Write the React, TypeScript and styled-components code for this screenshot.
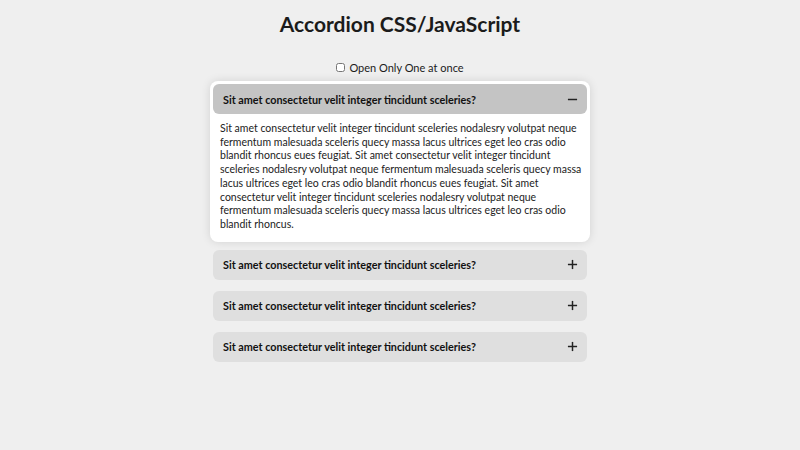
import React, { useState } from "react";
import styled, { createGlobalStyle } from "styled-components";

const GlobalStyle = createGlobalStyle`
  body {
    margin: 0;
    background: #efefef;
    font-family: Lato, "Noto Sans", sans-serif;
    color: #1b1b1b;
  }
`;

const Page = styled.main`
  width: 380px;
  margin: 0 auto;
  padding-top: 10px;
  display: flex;
  flex-direction: column;
  align-items: stretch;
`;

const Title = styled.h1`
  margin: 0;
  text-align: center;
  font-size: 21px;
  font-weight: 700;
  line-height: 28px;
`;

const Toggle = styled.label`
  margin: 21px 0 6px;
  display: flex;
  justify-content: center;
  align-items: center;
  gap: 4px;
  font-size: 11px;
  height: 16px;
  input {
    width: 9px;
    height: 9px;
    margin: 0;
  }
`;

const List = styled.div`
  display: flex;
  flex-direction: column;
  gap: 5px;
`;

const Item = styled.section<{ $open: boolean }>`
  padding: 3px;
  border-radius: 8px;
  background: ${(p) => (p.$open ? "#ffffff" : "transparent")};
  box-shadow: ${(p) => (p.$open ? "0 0 10px rgba(0, 0, 0, 0.12)" : "none")};
`;

const Header = styled.button<{ $open: boolean }>`
  width: 100%;
  height: 30px;
  padding: 0 9px 0 10px;
  border: none;
  border-radius: 6px;
  background: ${(p) => (p.$open ? "#c4c4c4" : "#dfdfdf")};
  display: flex;
  align-items: center;
  justify-content: space-between;
  font-family: inherit;
  font-size: 10.8px;
  font-weight: 700;
  color: #111;
  cursor: pointer;
  text-align: left;
`;

const Icon = styled.svg`
  width: 11px;
  height: 11px;
  stroke: #222;
  stroke-width: 1.6;
`;

const Body = styled.p`
  margin: 0;
  padding: 8px 3px 7px 7px;
  font-size: 10.5px;
  line-height: 13.7px;
  color: #222;
`;

const question = "Sit amet consectetur velit integer tincidunt sceleries?";
const answer =
  "Sit amet consectetur velit integer tincidunt sceleries nodalesry volutpat neque fermentum malesuada sceleris quecy massa lacus ultrices eget leo cras odio blandit rhoncus eues feugiat. Sit amet consectetur velit integer tincidunt sceleries nodalesry volutpat neque fermentum malesuada sceleris quecy massa lacus ultrices eget leo cras odio blandit rhoncus eues feugiat. Sit amet consectetur velit integer tincidunt sceleries nodalesry volutpat neque fermentum malesuada sceleris quecy massa lacus ultrices eget leo cras odio blandit rhoncus.";

const App = () => {
  const [onlyOne, setOnlyOne] = useState(false);
  const [open, setOpen] = useState<boolean[]>([true, false, false, false]);

  const toggle = (i: number) =>
    setOpen((prev) =>
      prev.map((v, j) => (j === i ? !v : onlyOne ? false : v))
    );

  return (
    <>
      <GlobalStyle />
      <Page>
        <Title>Accordion CSS/JavaScript</Title>
        <Toggle>
          <input type="checkbox" checked={onlyOne} onChange={(e) => setOnlyOne(e.target.checked)} />
          Open Only One at once
        </Toggle>
        <List>
          {open.map((isOpen, i) => (
            <Item key={i} $open={isOpen}>
              <Header $open={isOpen} onClick={() => toggle(i)}>
                {question}
                <Icon viewBox="0 0 12 12" fill="none">
                  <path d="M1 6h10" />
                  {!isOpen && <path d="M6 1v10" />}
                </Icon>
              </Header>
              {isOpen && <Body>{answer}</Body>}
            </Item>
          ))}
        </List>
      </Page>
    </>
  );
};

export default App;
